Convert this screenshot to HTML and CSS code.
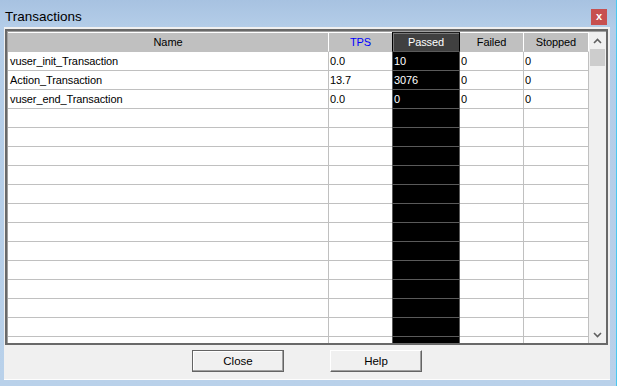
FILE: index.html
```html
<!DOCTYPE html>
<html>
<head>
<meta charset="utf-8">
<title>Transactions</title>
<link rel="stylesheet" href="styles.css">
</head>
<body>
<div class="frame">
  <div class="titlebar">
    <div class="title">Transactions</div>
    <div class="close-x">x</div>
  </div>
  <div class="client">
    <div class="grid">
      <div class="table">
        <div class="row head">
          <div class="cell">Name</div>
          <div class="cell tps">TPS</div>
          <div class="cell passed">Passed</div>
          <div class="cell">Failed</div>
          <div class="cell">Stopped</div>
        </div>
        <div class="row"><div class="cell name">vuser_init_Transaction</div><div class="cell tps">0.0</div><div class="cell passed">10</div><div class="cell">0</div><div class="cell">0</div></div>
        <div class="row"><div class="cell name">Action_Transaction</div><div class="cell tps">13.7</div><div class="cell passed">3076</div><div class="cell">0</div><div class="cell">0</div></div>
        <div class="row"><div class="cell name">vuser_end_Transaction</div><div class="cell tps">0.0</div><div class="cell passed">0</div><div class="cell">0</div><div class="cell">0</div></div>
        <div class="row"><div class="cell name"></div><div class="cell tps"></div><div class="cell passed"></div><div class="cell"></div><div class="cell"></div></div>
        <div class="row"><div class="cell name"></div><div class="cell tps"></div><div class="cell passed"></div><div class="cell"></div><div class="cell"></div></div>
        <div class="row"><div class="cell name"></div><div class="cell tps"></div><div class="cell passed"></div><div class="cell"></div><div class="cell"></div></div>
        <div class="row"><div class="cell name"></div><div class="cell tps"></div><div class="cell passed"></div><div class="cell"></div><div class="cell"></div></div>
        <div class="row"><div class="cell name"></div><div class="cell tps"></div><div class="cell passed"></div><div class="cell"></div><div class="cell"></div></div>
        <div class="row"><div class="cell name"></div><div class="cell tps"></div><div class="cell passed"></div><div class="cell"></div><div class="cell"></div></div>
        <div class="row"><div class="cell name"></div><div class="cell tps"></div><div class="cell passed"></div><div class="cell"></div><div class="cell"></div></div>
        <div class="row"><div class="cell name"></div><div class="cell tps"></div><div class="cell passed"></div><div class="cell"></div><div class="cell"></div></div>
        <div class="row"><div class="cell name"></div><div class="cell tps"></div><div class="cell passed"></div><div class="cell"></div><div class="cell"></div></div>
        <div class="row"><div class="cell name"></div><div class="cell tps"></div><div class="cell passed"></div><div class="cell"></div><div class="cell"></div></div>
        <div class="row"><div class="cell name"></div><div class="cell tps"></div><div class="cell passed"></div><div class="cell"></div><div class="cell"></div></div>
        <div class="row"><div class="cell name"></div><div class="cell tps"></div><div class="cell passed"></div><div class="cell"></div><div class="cell"></div></div>
        <div class="row"><div class="cell name"></div><div class="cell tps"></div><div class="cell passed"></div><div class="cell"></div><div class="cell"></div></div>
      </div>
      <div class="scrollbar">
        <div class="sb-btn">
          <svg width="9" height="6" viewBox="0 0 9 6"><path d="M1 5 L4.5 1.5 L8 5" fill="none" stroke="#606060" stroke-width="1.6"/></svg>
        </div>
        <div class="sb-thumb"></div>
        <div class="sb-track"></div>
        <div class="sb-btn">
          <svg width="9" height="6" viewBox="0 0 9 6"><path d="M1 1 L4.5 4.5 L8 1" fill="none" stroke="#606060" stroke-width="1.6"/></svg>
        </div>
      </div>
    </div>
    <div class="buttons">
      <div class="btn default">Close</div>
      <div class="btn">Help</div>
    </div>
  </div>
</div>
</body>
</html>
```
FILE: styles.css
```css
html, body {
  margin: 0;
  padding: 0;
}
body {
  background: #b9d1ea;
  font-family: "Liberation Sans", Arial, sans-serif;
  width: 617px;
  height: 386px;
  overflow: hidden;
}
.frame {
  width: 616px;
  height: 386px;
  border-right: 1px solid #4ac8f0;
  display: flex;
  flex-direction: column;
  background: linear-gradient(#a7c2e1 0, #b4cde8 27px, #b9d1ea 100%);
}
.titlebar {
  height: 27px;
  display: flex;
  justify-content: space-between;
  align-items: flex-start;
  flex: none;
}
.title {
  margin: 9px 0 0 5px;
  font-size: 13.5px;
  line-height: 16px;
  color: #000;
}
.close-x {
  width: 16px;
  height: 16px;
  margin: 9px 9px 0 0;
  background: #c75050;
  color: #fff;
  font-size: 11px;
  font-weight: bold;
  line-height: 14px;
  text-align: center;
}
.client {
  margin: 0 6px 6px 4px;
  height: 353px;
  box-sizing: border-box;
  background: #f0f0f0;
  border-bottom: 1px solid #fdfdfd;
  padding: 2px 2px 0 1px;
  display: flex;
  flex-direction: column;
}
.grid {
  height: 316px;
  flex: none;
  box-sizing: border-box;
  border: 2px solid #696969;
  display: flex;
  overflow: hidden;
}
.table {
  width: 581px;
  border-top: 1px solid #a0a0a0;
  border-left: 1px solid #a0a0a0;
  background: #fff;
  overflow: hidden;
  font-size: 11px;
  letter-spacing: -0.1px;
}
.row {
  display: grid;
  grid-template-columns: 321px 63px 68px 64px 65px;
  height: 19px;
}
.cell {
  box-sizing: border-box;
  border-right: 1px solid #c0c0c0;
  border-bottom: 1px solid #c0c0c0;
  padding-left: 1px;
  line-height: 18px;
  white-space: nowrap;
  overflow: hidden;
  color: #000;
}
.cell.name {
  padding-left: 2px;
}
.cell.tps {
  border-right: none;
}
.cell.passed {
  background: #000;
  color: #fff;
  border-left: 1px solid #5a5a5a;
  border-right: 1px solid #5a5a5a;
  border-bottom-color: #5a5a5a;
}
.row.head {
  height: 20px;
}
.head .cell {
  background: #c0c0c0;
  border-top: 1px solid #fff;
  border-right: 1px solid #fff;
  border-bottom: 1px solid #c0c0c0;
  text-align: center;
  line-height: 18px;
  padding-left: 0;
}
.head .cell.tps {
  color: #0000ff;
  border-right: none;
}
.head .cell.passed {
  background: #404040;
  color: #fff;
  border-top: 1px solid #202020;
  border-left: 1px solid #000;
  border-right: 1px solid #000;
  border-bottom: 1px solid #5a5a5a;
  box-shadow: inset 1px 1px 0 #7a7a7a;
}
.scrollbar {
  width: 17px;
  border-top: 1px solid #a0a0a0;
  background: #f0f0f0;
  display: flex;
  flex-direction: column;
}
.sb-btn {
  height: 17px;
  display: flex;
  align-items: center;
  justify-content: center;
  flex: none;
}
.sb-thumb {
  height: 17px;
  margin: 0 1px;
  background: #cdcdcd;
  flex: none;
}
.sb-track {
  flex: 1;
}
.buttons {
  display: flex;
  gap: 46px;
  padding: 5px 0 0 187px;
}
.btn {
  width: 92px;
  height: 22px;
  box-sizing: border-box;
  background: #f0f0f0;
  border-top: 1px solid #fff;
  border-left: 1px solid #fff;
  border-right: 1px solid #646464;
  border-bottom: 1px solid #646464;
  box-shadow: inset -1px -1px 0 #a0a0a0;
  font-size: 11.5px;
  line-height: 20px;
  text-align: center;
  color: #000;
}
.btn.default {
  border: 1px solid #646464;
  box-shadow: inset -1px -1px 0 #a0a0a0, inset 1px 1px 0 #fff;
}
```
